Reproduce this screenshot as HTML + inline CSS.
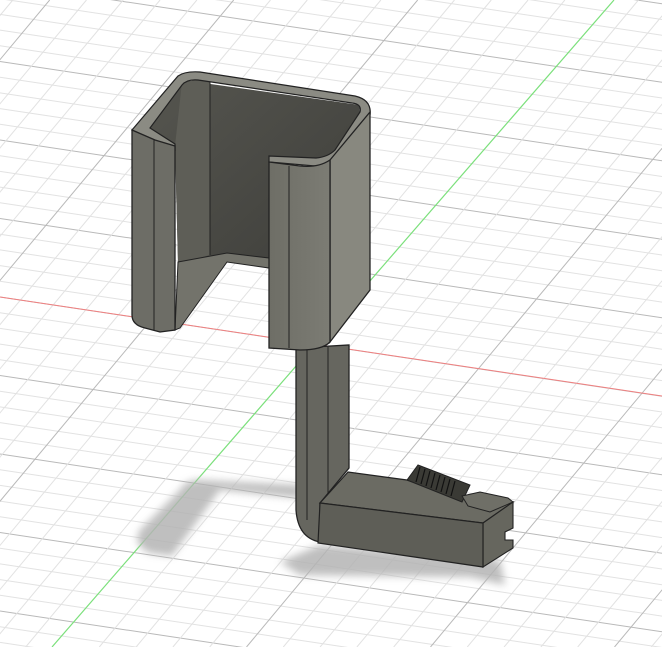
<!DOCTYPE html>
<html><head><meta charset="utf-8"><style>
html,body{margin:0;padding:0;background:#fff;overflow:hidden;width:662px;height:647px}
svg{display:block}
</style></head><body>
<svg id="s" width="662" height="647" viewBox="0 0 662 647" xmlns="http://www.w3.org/2000/svg">
<defs>
<filter id="bl" x="-20%" y="-20%" width="140%" height="140%"><feGaussianBlur stdDeviation="4"/></filter>
<linearGradient id="back" x1="0" y1="0" x2="1" y2="1"><stop offset="0" stop-color="#55554f"/><stop offset="1" stop-color="#3e3e3a"/></linearGradient>
<linearGradient id="rf" x1="0" y1="0" x2="1" y2="0"><stop offset="0" stop-color="#6e6e66"/><stop offset="1" stop-color="#7c7c74"/></linearGradient>
</defs>
<g id="grid"></g>
<line x1="0" y1="297" x2="662" y2="396" stroke="#f08080" stroke-width="1"/>
<line x1="614" y1="0" x2="52" y2="647" stroke="#7be07b" stroke-width="1.2"/>
<g filter="url(#bl)" fill="#b4b4b4" opacity="0.85">
<path d="M140,530 Q132,545 150,553 L172,556 L220,490 L300,498 L300,485 L200,480 Q185,480 180,490 Z"/>
<path d="M280,562 L320,545 L500,560 L505,585 L470,577 L300,575 Z"/>
</g>
<!-- stem -->
<path d="M296,348 L349,345 L349,468 L320,503 L320,542 Q298,538 296,510 Z" fill="#66665f" stroke="#222" stroke-width="1.3"/>
<path d="M307,348 L307,520 M328,347 L328,495" stroke="#222" stroke-width="1" fill="none"/>
<!-- foot -->
<path d="M320,503 L348,472 L407,480 L470,500 L513,502 L483,523 Z" fill="#6b6b63" stroke="#222" stroke-width="1.2"/>
<path d="M483,523 L513,502 L513,528 L505,532 L505,540 L513,540 L513,548 L483,567 Z" fill="#66665e" stroke="#222" stroke-width="1.1"/>
<path d="M320,503 L483,523 L483,567 L318,543 Z" fill="#5e5e57" stroke="#222" stroke-width="1.2"/>
<path d="M407,480 L418,465 L470,485 L462,502 Z" fill="#3a3a35" stroke="#222" stroke-width="1"/>
<path d="M420,467 L416,482 M425,469 L421,484 M430,471 L426,486 M435,473 L431,488 M440,475 L436,490 M445,477 L441,492 M450,479 L446,494 M455,481 L451,496" stroke="#111" stroke-width="1.2"/>
<path d="M462,496 L480,492 L508,498 L513,502 L490,512 L468,506 Z" fill="#6f6f67" stroke="#222" stroke-width="1"/>
<!-- holder: interior -->
<path d="M150,128 L182,80 L360,105 L358,150 L330,160 L269,158 L269,268 L227,260 L178,262 L175,146 Z" fill="url(#back)"/>
<path d="M175,146 L182,82 L210,78 L210,255 L178,264 Z" fill="#5e5e57"/>
<line x1="210" y1="78" x2="210" y2="255" stroke="#222" stroke-width="1"/>
<path d="M178,262 L227,253 L269,258 L269,268 L227,262 L180,328 L175,330 Z" fill="#73736b" stroke="#222" stroke-width="1"/>
<!-- rim -->
<path d="M132,130 L178,76 Q185,71 200,72 L355,96 Q372,100 370,115 L335,158 Q328,165 315,166 L269,162 L269,156 L316,158 Q328,157 335,150 L360,112 Q362,104 352,103 L198,80 Q187,79 182,85 L150,128 L175,144 L175,150 Z" fill="#8b8b83" stroke="#222" stroke-width="1.2"/>
<!-- left panel -->
<path d="M132,130 L155,140 L175,146 L175,330 L160,332 L145,328 Q132,325 132,315 Z" fill="#6d6d66" stroke="#222" stroke-width="1.3"/>
<path d="M154,140 L154,330" stroke="#222" stroke-width="1"/>
<!-- right panel -->
<path d="M330,160 L370,112 L370,290 L330,342 Z" fill="#88887f" stroke="#222" stroke-width="1.3"/>
<path d="M269,162 L300,166 Q318,168 330,160 L330,342 Q322,350 300,350 L269,348 Z" fill="url(#rf)" stroke="#222" stroke-width="1.3"/>
<path d="M289,166 L289,348" stroke="#222" stroke-width="1"/>
</svg>
<script>
var g=document.getElementById('grid'),h='';
for(var k=-30;k<=40;k++){var c=297+15.7*k;var maj=(k%5===0);
h+='<line x1="0" y1="'+c+'" x2="662" y2="'+(c+662*0.15)+'" stroke="'+(maj?'#b9b9b9':'#e2e2e2')+'" stroke-width="1"/>';}
for(var k=-20;k<=30;k++){var x=310+36.8*k;if(k===0)continue;var maj=(k%5===0);
var x0=x+350/1.2,x1=x-297/1.2;
h+='<line x1="'+x0+'" y1="0" x2="'+x1+'" y2="647" stroke="'+(maj?'#b9b9b9':'#e2e2e2')+'" stroke-width="1"/>';}
g.innerHTML=h;
</script>
</body></html>
